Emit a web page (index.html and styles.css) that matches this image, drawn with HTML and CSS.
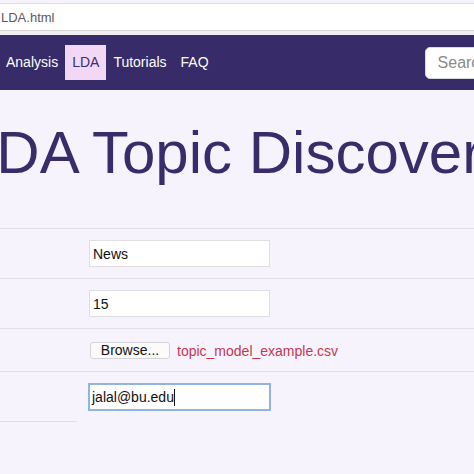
FILE: index.html
```html
<!DOCTYPE html>
<html lang="en">
<head>
<meta charset="utf-8">
<title>LDA Topic Discovery</title>
<link rel="stylesheet" href="styles.css">
</head>
<body>
  <div class="addressbar">
    <div class="url">LDA.html</div>
  </div>
  <div class="toolbar-gap"></div>
  <nav class="navbar">
    <ul class="nav-links">
      <li><a href="#">Analysis</a></li>
      <li><a href="#" class="active">LDA</a></li>
      <li><a href="#">Tutorials</a></li>
      <li><a href="#">FAQ</a></li>
    </ul>
    <input class="search" type="search" placeholder="Search">
  </nav>

  <main class="sheet">
    <h1 class="title">LDA Topic Discovery</h1>
    <form class="form-grid">
      <div class="label"></div>
      <div class="field"><input class="text-input" type="text" value="News" aria-label="Name"></div>

      <div class="label"></div>
      <div class="field"><input class="text-input" type="text" value="15" aria-label="Topics"></div>

      <div class="label"></div>
      <div class="field file-field">
        <span class="browse">Browse...</span>
        <span class="filename">topic_model_example.csv</span>
      </div>

      <div class="label"></div>
      <div class="field last"><span class="text-input focused">jalal@bu.edu<span class="caret"></span></span></div>
    </form>
  </main>
</body>
</html>
```

FILE: styles.css
```css
html, body {
  margin: 0;
  padding: 0;
  overflow: hidden;
}

body {
  background: #f7f3fc;
  font-family: "Liberation Sans", Arial, sans-serif;
  color: #222;
}

/* browser location bar */
.addressbar {
  height: 26px;
  margin-top: 3px;
  border-top: 1px solid #dedede;
  border-bottom: 1px solid #d4d4d4;
  background: #ffffff;
  display: flex;
  align-items: center;
}

.url {
  padding-left: 1px;
  font-size: 13px;
  color: #5a5a5a;
}

.toolbar-gap {
  height: 4px;
  background: #efeff1;
}

/* site navigation */
.navbar {
  width: 700px;
  height: 55px;
  background: #372c69;
  display: flex;
  align-items: center;
}

.nav-links {
  list-style: none;
  margin: 0 0 0 -1px;
  padding: 0;
  display: flex;
}

.nav-links a {
  display: block;
  padding: 0 7px;
  line-height: 35px;
  font-size: 14px;
  color: #ffffff;
  text-decoration: none;
}

.nav-links a.active {
  background: #f3d8f6;
  color: #3a2e6c;
}

.search {
  margin-left: 209px;
  width: 220px;
  height: 32px;
  box-sizing: border-box;
  border: 1px solid #d8d8e0;
  border-radius: 5px;
  padding: 0 12px;
  font-family: inherit;
  font-size: 16px;
  background: #ffffff;
}

.search::placeholder {
  color: #8a8a8a;
}

/* page body, scrolled partly out of view on the left */
.sheet {
  margin-left: -160px;
}

.title {
  margin: 0;
  padding: 27px 0 0 123px;
  height: 111px;
  border-bottom: 1px solid #e3dee9;
  font-size: 60px;
  font-weight: normal;
  line-height: 72px;
  color: #382c6b;
  white-space: nowrap;
}

.form-grid {
  display: grid;
  grid-template-columns: 237px 1fr;
}

.label {
  border-bottom: 1px solid #e3dee9;
}

.field {
  padding: 11px 0 11px 12px;
  border-bottom: 1px solid #e3dee9;
  display: flex;
  align-items: center;
}

.field.last {
  border-bottom: none;
}

.text-input {
  width: 181px;
  height: 27px;
  box-sizing: border-box;
  border: 1px solid #e0dde3;
  background: #ffffff;
  padding: 0 3px;
  font-family: inherit;
  font-size: 14px;
  color: #111;
  display: flex;
  align-items: center;
  outline: none;
}

.text-input.focused {
  width: 183px;
  height: 28px;
  margin-left: -1px;
  border: 2px solid #8fb3e3;
  padding: 0 2px;
}

.caret {
  display: inline-block;
  width: 1px;
  height: 17px;
  background: #111;
}

.file-field {
  padding: 13px 0 12px 13px;
  gap: 7px;
}

.browse {
  width: 80px;
  height: 17px;
  box-sizing: border-box;
  border: 1px solid #d6d3da;
  border-radius: 3px;
  background: #fbfbfc;
  font-size: 14px;
  line-height: 15px;
  text-align: center;
  color: #111;
}

.filename {
  font-size: 14px;
  color: #c73650;
}
```
